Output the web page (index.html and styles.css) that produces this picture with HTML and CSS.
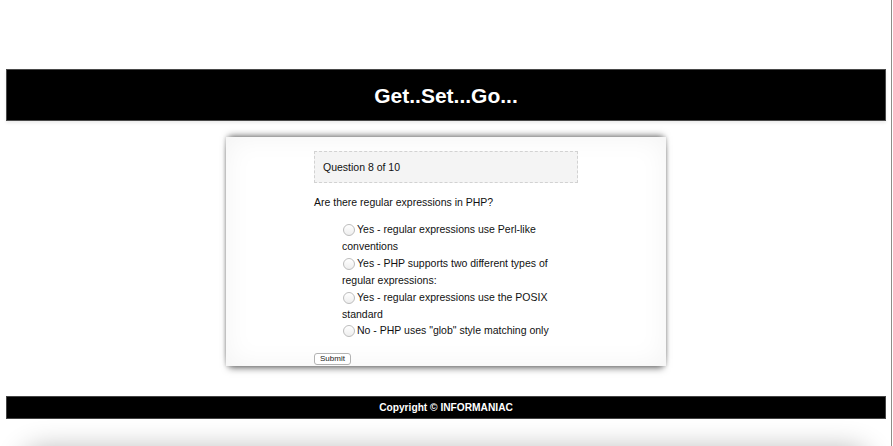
FILE: index.html
```html
<!DOCTYPE html>
<html lang="en">
<head>
<meta charset="utf-8">
<title>Get..Set...Go...</title>
<link rel="stylesheet" href="styles.css">
</head>
<body>
<div class="window">
  <header class="banner">
    <h1 class="banner-title">Get..Set...Go...</h1>
  </header>
  <main class="card">
    <form class="quiz">
      <div class="progress">Question 8 of 10</div>
      <p class="question">Are there regular expressions in PHP?</p>
      <ul class="options">
        <li class="option"><input class="radio" type="radio" name="answer" value="1">Yes - regular expressions use Perl-like conventions</li>
        <li class="option"><input class="radio" type="radio" name="answer" value="2">Yes - PHP supports two different types of regular expressions:</li>
        <li class="option"><input class="radio" type="radio" name="answer" value="3">Yes - regular expressions use the POSIX standard</li>
        <li class="option"><input class="radio" type="radio" name="answer" value="4">No - PHP uses "glob" style matching only</li>
      </ul>
      <button class="submit" type="button">Submit</button>
    </form>
  </main>
  <footer class="footer">Copyright © INFORMANIAC</footer>
  <div class="next-card"></div>
</div>
</body>
</html>
```

FILE: styles.css
```css
html, body {
  margin: 0;
  padding: 0;
  background: #fff;
}
body {
  font-family: "Liberation Sans", Arial, Helvetica, sans-serif;
  color: #111;
  overflow: hidden;
  height: 446px;
}
.window {
  width: 892px;
  height: 446px;
  border-right: 1px solid #8e8e88;
  padding: 69px 0 0 1px;
  box-sizing: border-box;
  overflow: hidden;
}
.banner {
  margin: 0 5px 0 5px;
  height: 52px;
  background: #000;
  border: 1px solid #4a4a4a;
  box-sizing: border-box;
  display: flex;
  align-items: center;
  justify-content: center;
  box-shadow: 0 2px 3px rgba(0,0,0,0.08);
}
.banner-title {
  margin: 0;
  color: #fff;
  font-size: 21px;
  font-weight: bold;
  line-height: 1;
  padding-top: 1px;
}
.card {
  width: 440px;
  height: 229px;
  margin: 16px auto 0;
  box-sizing: border-box;
  padding-top: 14px;
  background: #fff;
  box-shadow: 0 -4px 7px -3px rgba(0,0,0,0.55),
              0 5px 7px -3px rgba(0,0,0,0.55),
              0 0 4px rgba(0,0,0,0.18),
              inset 0 0 28px rgba(0,0,0,0.05);
}
.quiz {
  width: 264px;
  margin: 0 auto;
  font-size: 10.5px;
}
.progress {
  height: 32px;
  box-sizing: border-box;
  border: 1px dashed #d2d2d2;
  background: #f4f4f4;
  padding-left: 8px;
  display: flex;
  align-items: center;
  color: #111;
}
.question {
  margin: 11px 0 10px;
  line-height: 17px;
}
.options {
  list-style: none;
  margin: 0;
  padding: 0 0 0 28px;
}
.option {
  line-height: 16.9px;
}
.radio {
  -webkit-appearance: none;
  appearance: none;
  width: 12px;
  height: 12px;
  margin: 0 2px 0 1px;
  border: 1px solid #bdbdbd;
  border-radius: 50%;
  background: linear-gradient(#ffffff, #eeeeee);
  vertical-align: -3px;
  box-sizing: border-box;
}
.submit {
  margin-top: 14px;
  height: 12px;
  padding: 0 5px;
  font-family: "Liberation Sans", Arial, sans-serif;
  font-size: 8px;
  line-height: 10px;
  color: #222;
  background: #fff;
  border: 1px solid #b3b3b3;
  border-radius: 3px;
  display: block;
}
.footer {
  margin: 30px 5px 0 5px;
  height: 23px;
  background: #000;
  border: 1px solid #444;
  box-sizing: border-box;
  color: #fff;
  font-size: 10.2px;
  font-weight: bold;
  display: flex;
  align-items: center;
  justify-content: center;
}
.next-card {
  margin: 30px 22px 0 22px;
  height: 40px;
  border-radius: 20px;
  background: #fff;
  box-shadow: 0 0 28px rgba(0,0,0,0.3);
}
```
